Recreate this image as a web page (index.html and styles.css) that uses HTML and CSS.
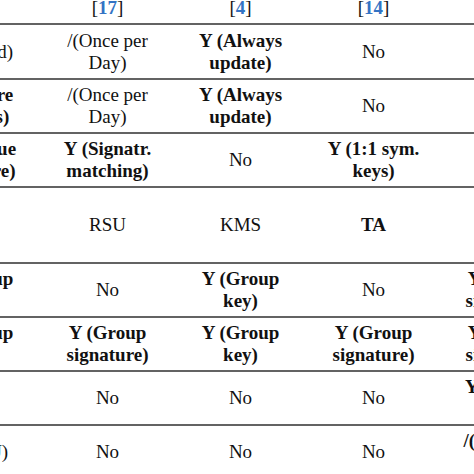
FILE: index.html
```html
<!DOCTYPE html>
<html>
<head>
<meta charset="utf-8">
<link rel="stylesheet" href="styles.css">
</head>
<body>
<div class="page">
<table class="cmp">
  <thead>
    <tr>
      <th>[<span class="ref">9</span>]</th>
      <th>[<span class="ref">17</span>]</th>
      <th>[<span class="ref">4</span>]</th>
      <th>[<span class="ref">14</span>]</th>
      <th>Ours</th>
    </tr>
  </thead>
  <tbody>
    <tr class="r1">
      <td>Y (24 Hd)</td>
      <td>/(Once per<br>Day)</td>
      <td class="b">Y (Always<br>update)</td>
      <td>No</td>
      <td>No</td>
    </tr>
    <tr>
      <td class="b">Y (Before<br>updates)</td>
      <td>/(Once per<br>Day)</td>
      <td class="b">Y (Always<br>update)</td>
      <td>No</td>
      <td>No</td>
    </tr>
    <tr>
      <td class="b">Y (Unique<br>signature)</td>
      <td class="b">Y (Signatr.<br>matching)</td>
      <td>No</td>
      <td class="b">Y (1:1 sym.<br>keys)</td>
      <td class="b">N/A</td>
    </tr>
    <tr class="tall">
      <td>CA</td>
      <td>RSU</td>
      <td>KMS</td>
      <td class="b">TA</td>
      <td class="b">TA</td>
    </tr>
    <tr>
      <td class="b">Y (Group<br>key)</td>
      <td>No</td>
      <td class="b">Y (Group<br>key)</td>
      <td>No</td>
      <td class="b">Y (Group<br>signature)</td>
    </tr>
    <tr>
      <td class="b">Y (Group<br>key)</td>
      <td class="b">Y (Group<br>signature)</td>
      <td class="b">Y (Group<br>key)</td>
      <td class="b">Y (Group<br>signature)</td>
      <td class="b">Y (Group<br>signature)</td>
    </tr>
    <tr>
      <td>No</td>
      <td>No</td>
      <td>No</td>
      <td>No</td>
      <td class="b">Y (Always<br>on)</td>
    </tr>
    <tr>
      <td>Y (RSU)</td>
      <td>No</td>
      <td>No</td>
      <td>No</td>
      <td class="b">/(Once per<br>Day)</td>
    </tr>
  </tbody>
</table>
</div>
</body>
</html>
```

FILE: styles.css
```css
html, body {
  margin: 0;
  padding: 0;
  background: #ffffff;
}

.page {
  width: 474px;
  height: 474px;
  overflow: hidden;
}

.cmp {
  margin: -3px 0 0 -92px;
  border-collapse: separate;
  border-spacing: 0;
  table-layout: fixed;
  width: 665px;
  color: #111111;
  font-family: "Liberation Serif", "DejaVu Serif", "Times New Roman", serif;
  font-size: 19px;
  line-height: 22px;
}

.cmp th,
.cmp td {
  width: 133px;
  padding: 0;
  text-align: center;
  vertical-align: middle;
  border-bottom: 2px solid #636363;
  font-family: "Liberation Serif", "DejaVu Serif", "Times New Roman", serif;
}

.cmp th {
  font-weight: normal;
  height: 22px;
  padding-bottom: 4px;
  vertical-align: bottom;
}

.cmp td {
  height: 52px;
}

.cmp tr.r1 td {
  height: 53px;
}

.cmp tr.tall td {
  height: 74px;
}

.cmp .b {
  font-weight: bold;
}

.ref {
  color: #3373c4;
  font-weight: bold;
}
```
